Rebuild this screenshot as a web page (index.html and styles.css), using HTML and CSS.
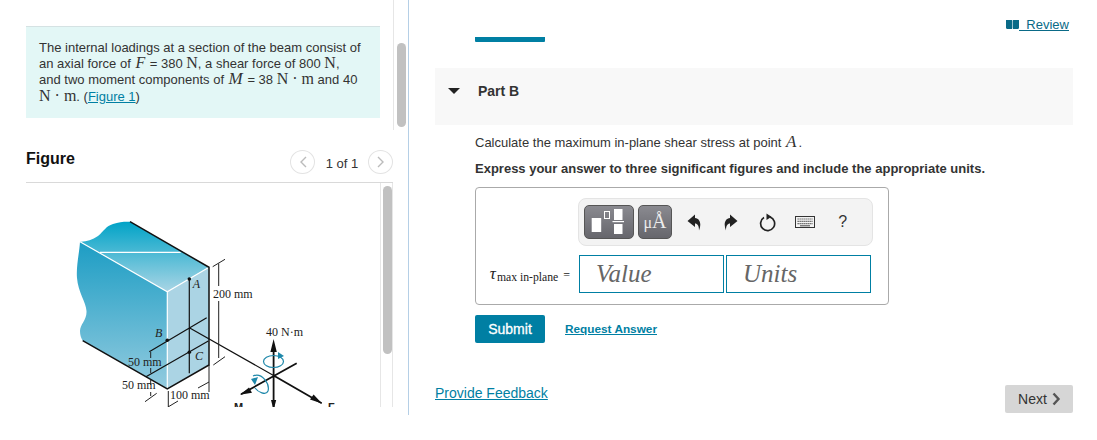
FILE: index.html
```html
<!DOCTYPE html>
<html lang="en">
<head>
<meta charset="utf-8">
<title>Part B</title>
<link rel="stylesheet" href="styles.css">
</head>
<body>
<div class="page">
  <aside class="left">
    <div class="statement-wrap">
      <div class="statement-col">
        <div class="statement">
          The internal loadings at a section of the beam consist of<br>
          an axial force of <i class="m">F</i> = 380 <span class="r">N</span>, a shear force of 800 <span class="r">N</span>,<br>
          and two moment components of <i class="m big">M</i> = 38 <span class="r">N · m</span> and 40<br>
          <span class="last"><span class="r">N · m</span>. (<a href="#" class="link">Figure 1</a>)</span>
        </div>
      </div>
      <div class="track outer"><div class="thumb outer-thumb"></div></div>
    </div>
    <div class="figure-sec">
      <div class="figure-head">
        <h2 class="figure-title">Figure</h2>
        <div class="pager">
          <span class="circle"><svg width="10" height="14" viewBox="0 0 10 14"><path d="M8 2 L3 7 L8 12" fill="none" stroke="#bbb" stroke-width="1.4"/></svg></span>
          <span class="count">1 of 1</span>
          <span class="circle"><svg width="10" height="14" viewBox="0 0 10 14"><path d="M2 2 L7 7 L2 12" fill="none" stroke="#bbb" stroke-width="1.4"/></svg></span>
        </div>
      </div>
      <div class="figure-body">
        <svg class="beam" width="354" height="224" viewBox="26 183 354 224">
          <defs>
            <linearGradient id="gTop" x1="0" y1="0" x2="0" y2="1"><stop offset="0" stop-color="#00a3c7"/><stop offset="1" stop-color="#a9d5e5"/></linearGradient>
            <linearGradient id="gLeft" x1="0" y1="0" x2="0" y2="1"><stop offset="0" stop-color="#1c9dc4"/><stop offset="1" stop-color="#93cbdf"/></linearGradient>
          </defs>
          <path d="M80 241.7 C86 242 92 240 98 236 C104 231 106 226 113 224 C119 222 124 221.5 130 221.7 L209 267.3 L167.3 291.7 Z" fill="url(#gTop)"/>
          <path d="M80 241.7 C79.5 252 76 266 77 278 C78 292 86 302 86.5 311 C87 320 80 324 80 331 C80 335 81 338 82.7 340.7 L167.3 389 L167.3 291.7 Z" fill="url(#gLeft)"/>
          <path d="M167.3 291.7 L209 267.3 L209 365 L167.3 389 Z" fill="#abd4e4"/>
          <path d="M80 241.7 L167.3 291.7 L209 267.3 M100 252.3 L180.7 252.3 M167.3 291.7 L167.3 389" fill="none" stroke="#fff" stroke-width="1.2"/>
          <path d="M130 221.7 L209 267.3 L209 365 L167.3 389 L82.7 340.7" fill="none" stroke="#111" stroke-width="1.5"/>
          <path d="M189.3 279 L189.3 373.3 M149.3 351.7 L206.7 317.7 M146 376.7 L208.3 341 M189.3 327.7 L274 375.7" fill="none" stroke="#111" stroke-width="1.2"/>
          <circle cx="189.3" cy="279" r="1.8" fill="#111"/>
          <circle cx="167.3" cy="340.3" r="1.8" fill="#111"/>
          <circle cx="189.3" cy="352.3" r="1.8" fill="#111"/>
          <path d="M218.7 263.5 L218.7 286 M218.7 301 L218.7 358 M212.7 266.7 L225 259.3 M213.3 365 L225 356.7 M168.3 391 L168.3 407 M209 365 L209 392 M198 388 L209 382 M168 407 L178 401 M145 401.7 L156.7 393.3 M150.7 352 L150.7 358 M150.7 368 L150.7 373 M150.7 379 L150.7 385 M150.7 392 L150.7 396" fill="none" stroke="#222" stroke-width="1"/>
          <path d="M273.6 345 L273.6 407 M241 394.3 L296.7 363.3 M274 375.7 L321.7 403.3" fill="none" stroke="#111" stroke-width="1.8"/>
          <path d="M273.6 339 L270.4 352 L276.8 352 Z M322 403.5 L310 399.6 L313.6 394.6 Z M240 394.8 L249 387.5 L252 392.8 Z M273.6 410 L271 400 L276.2 400 Z" fill="#111"/>
          <ellipse cx="273.5" cy="361.5" rx="10" ry="6" fill="none" stroke="#1f88aa" stroke-width="1.2"/>
          <path d="M278 352 L284 356 L278 359 Z" fill="#1f88aa"/>
          <path d="M253 376 C262 372 270 384 268 391 C266 396 258 392 255 388" fill="none" stroke="#1f88aa" stroke-width="1.2"/>
          <path d="M251 379 L258 377 L255 385 Z" fill="#1f88aa"/>
          <g class="fig-text">
            <text x="213" y="298">200 mm</text>
            <text x="266" y="336">40 N·m</text>
            <text x="128" y="366">50 mm</text>
            <text x="122" y="389">50 mm</text>
            <text x="170" y="399">100 mm</text>
            <text x="192.7" y="288" class="fig-i">A</text>
            <text x="155" y="337" class="fig-i">B</text>
            <text x="195" y="360" class="fig-i">C</text>
            <text x="234" y="411" class="fig-b">M</text>
            <text x="328" y="411" class="fig-b">F</text>
          </g>
        </svg>
        <div class="track inner"><div class="thumb inner-thumb"></div></div>
      </div>
    </div>
  </aside>

  <main class="right">
    <div class="review-row">
      <a href="#" class="review">
        <svg class="book" width="13" height="9" viewBox="0 0 13 9"><path d="M0 0 H5.6 C6 0 6.2 .3 6.2 .6 V9 H.8 L0 8 Z M6.8 .6 C6.8 .3 7 0 7.4 0 H13 V8 L12.2 9 H6.8 Z" fill="#0a6a87"/></svg>
        <span class="review-text">&nbsp;&nbsp;Review</span>
      </a>
    </div>
    <div class="progress-row"><div class="progress"></div></div>
    <div class="part-head">
      <span class="tri"></span>
      <h3 class="part-title">Part B</h3>
    </div>
    <div class="part-body">
      <p class="q">Calculate the maximum in-plane shear stress at point <i class="m wide-m">A</i>.</p>
      <p class="instr">Express your answer to three significant figures and include the appropriate units.</p>
      <div class="answer">
        <div class="toolbar">
          <button class="tbtn wide" type="button">
            <svg width="48" height="32" viewBox="1 1 48 32">
              <rect x="7.7" y="13" width="9.5" height="14" fill="#fff"/>
              <rect x="20.5" y="6.5" width="5" height="7" fill="none" stroke="#fff" stroke-width="1"/>
              <rect x="30" y="4" width="8.5" height="11" fill="#fff"/>
              <rect x="28.5" y="16" width="11.5" height="1.2" fill="#fff"/>
              <rect x="30" y="19" width="8.5" height="10" fill="#fff"/>
            </svg>
          </button>
          <button class="tbtn unit" type="button"><span class="mu">μ</span>Å</button>
          <span class="tool">
            <svg width="14" height="17" viewBox="0 0 14 17"><path d="M8 .5 L.5 7 L8 13 V9.5 C10.5 9.5 12 11.5 12 16.5 C14.5 11 13.5 4.5 8 4 Z" fill="#222"/></svg>
          </span>
          <span class="tool">
            <svg width="14" height="17" viewBox="0 0 14 17"><path d="M6 .5 L13.5 7 L6 13 V9.5 C3.5 9.5 2 11.5 2 16.5 C-.5 11 .5 4.5 6 4 Z" fill="#222"/></svg>
          </span>
          <span class="tool">
            <svg width="18" height="19" viewBox="0 0 18 19"><path d="M11 4 A7 7 0 1 1 5 4.6" fill="none" stroke="#222" stroke-width="1.7"/><path d="M7.5 .5 L12.5 3.8 L7.5 7 Z" fill="#222"/></svg>
          </span>
          <span class="tool">
            <svg width="20" height="12" viewBox="0 0 20 12"><rect x=".5" y=".5" width="19" height="11" fill="#f3f3f3" stroke="#333"/><path d="M2.5 3 H17.5 M2.5 5.3 H17.5 M2.5 7.6 H17.5" stroke="#555" stroke-width="1.2" stroke-dasharray="1.3 .7"/><path d="M5 9.8 H15" stroke="#555" stroke-width="1.1"/></svg>
          </span>
          <span class="tool help">?</span>
        </div>
        <div class="eq-row">
          <span class="eq-label"><i class="tau">τ</i><span class="sub">max in-plane</span><span class="eq">=</span></span>
          <input class="field" type="text" placeholder="Value">
          <input class="field" type="text" placeholder="Units">
        </div>
      </div>
      <div class="actions">
        <button class="submit" type="button">Submit</button>
        <a href="#" class="request">Request Answer</a>
      </div>
    </div>
    <div class="foot">
      <a href="#" class="feedback">Provide Feedback</a>
      <button class="next" type="button">Next
        <svg width="10" height="14" viewBox="0 0 10 14"><path d="M2.5 1.5 L7.5 7 L2.5 12.5" fill="none" stroke="#555" stroke-width="2.4"/></svg>
      </button>
    </div>
  </main>
</div>
</body>
</html>
```

FILE: styles.css
```css
* { box-sizing: border-box; }
html, body { margin: 0; padding: 0; background: #fff; }
body { font-family: "Liberation Sans", Arial, sans-serif; font-size: 13px; color: #333; height: 440px; overflow: hidden; }
a { color: #007fa3; }
.page { display: flex; height: 415px; }

.left { width: 409px; flex: none; border-right: 1px solid #b5cfe6; }
.statement-wrap { display: flex; height: 130px; }
.statement-col { width: 393px; padding: 26px 13px 0 26px; }
.statement { height: 92px; padding: 13px 0 0 13px; background: #e3f7f6; border-top: 1px solid #d5e2e3; line-height: 16px; white-space: nowrap; }
.m { font-family: "Liberation Serif", serif; font-size: 16px; line-height: 1px; padding: 0 1px; }
.big { font-size: 17px; }
.wide-m { font-size: 17px; padding: 0 2px 0 1px; }
.r { font-family: "Liberation Serif", serif; font-size: 16px; line-height: 1px; }
.last { display: inline-block; margin-top: 1px; }
.link { color: #007fa3; }

.track { background: #fff; border-left: 1px solid #e6e6e6; }
.thumb { background: #c1c1c1; border-radius: 5px; }
.outer { width: 15px; padding: 43px 2px 0 3px; }
.outer-thumb { height: 84px; width: 9px; }
.inner { width: 13px; height: 224px; border-right: 1px solid #e6e6e6; padding: 3px 1px 0 2px; }
.inner-thumb { height: 168px; width: 9px; }

.figure-sec { padding-left: 26px; }
.figure-head { width: 367px; height: 53px; padding-top: 20px; border-bottom: 1px solid #d9d9d9; display: flex; justify-content: space-between; align-items: flex-start; }
.figure-title { margin: 0; font-size: 16px; line-height: 17px; font-weight: bold; color: #111; }
.pager { display: flex; align-items: center; margin-top: 0; }
.circle { width: 25px; height: 24px; border: 1px solid #e3e3e3; border-radius: 50%; display: flex; align-items: center; justify-content: center; }
.count { width: 53px; text-align: center; padding: 3px 0 0 1px; color: #333; }
.figure-body { display: flex; width: 367px; }
.beam { display: block; flex: none; }
.fig-text text { font-family: "Liberation Serif", serif; font-size: 12px; fill: #222; }
.fig-text .fig-i { font-style: italic; font-size: 12px; }
.fig-text .fig-b { font-family: "Liberation Sans", sans-serif; font-weight: bold; font-size: 11px; }

.right { flex: 1; min-width: 0; padding: 0 24px 0 26px; }
.review-row { height: 37px; display: flex; justify-content: flex-end; padding: 17px 4px 0 0; }
.review { display: flex; align-items: center; height: 14px; color: #0a6a87; }
.book { display: block; }
.review-text { text-decoration: underline; }
.progress-row { height: 31px; padding-left: 40px; }
.progress { width: 70px; height: 5px; background: #007fa3; border-radius: 0 0 1px 1px; }
.part-head { height: 57px; background: #f8f8f8; display: flex; align-items: flex-start; padding: 15px 0 0 13px; }
.tri { width: 0; height: 0; margin-top: 5px; border-left: 6px solid transparent; border-right: 6px solid transparent; border-top: 6px solid #222; }
.part-title { margin: 0 0 0 18px; font-size: 14px; line-height: 16px; font-weight: bold; color: #333; }
.part-body { padding-left: 40px; }
.q { margin: 0; padding-top: 9px; line-height: 17px; }
.instr { margin: 9px 0 0; line-height: 17px; font-weight: bold; }
.answer { width: 414px; height: 118px; margin-top: 10px; border: 1px solid #aaa; border-radius: 4px; padding: 10px 17px 0 0; display: flex; flex-direction: column; align-items: flex-end; }
.toolbar { width: 295px; height: 48px; margin-right: -2px; background: #f3f3f3; border: 1px solid #e4e4e4; border-radius: 8px; display: flex; align-items: center; padding-left: 5px; }
.tbtn { height: 34px; padding: 0; border: 1px solid #555; border-radius: 5px; background: linear-gradient(#8a8a90, #66666c); color: #fff; display: flex; align-items: center; justify-content: center; }
.wide { width: 50px; }
.unit { width: 34px; margin: 0 3px 0 4px; font-family: "Liberation Serif", serif; font-size: 20px; color: #ececec; align-items: baseline; padding-top: 4px; }
.mu { font-size: 16px; }
.tool { width: 37.25px; display: flex; justify-content: center; align-items: center; }
.help { font-size: 16px; color: #333; }
.eq-row { display: flex; align-items: center; margin-top: 9px; height: 38px; }
.eq-label { font-family: "Liberation Serif", serif; font-size: 12px; margin-right: 9px; color: #222; white-space: nowrap; }
.tau { font-size: 17px; }
.sub { font-size: 11.7px; position: relative; top: 2px; margin-left: 1px; }
.eq { margin-left: 5px; }
.field { width: 145px; height: 38px; border: 1.5px solid #007fa3; background: #fff; margin-left: 2px; padding: 0 0 0 16px; font-family: "Liberation Serif", serif; font-style: italic; font-size: 25px; border-radius: 0; outline: none; }
.eq-label + .field { margin-left: 0; }
.field::placeholder { color: #666; opacity: 1; }
.actions { display: flex; align-items: center; margin-top: 10px; height: 28px; }
.submit { width: 70px; height: 28px; border: 0; border-radius: 2px; background: #007fa3; color: #fff; font-family: "Liberation Sans", sans-serif; font-size: 14px; font-weight: normal; padding: 0; -webkit-text-stroke: .3px #fff; }
.request { margin-left: 20px; font-size: 11.8px; font-weight: bold; }
.foot { display: flex; justify-content: space-between; align-items: flex-start; margin-top: 42px; }
.feedback { font-size: 14px; line-height: 16px; }
.next { width: 68px; height: 28px; border: 0; border-radius: 2px; background: #d6d6d6; color: #333; font-family: "Liberation Sans", sans-serif; font-size: 14px; padding: 0 0 0 1px; display: flex; align-items: center; justify-content: center; gap: 4px; }
```
